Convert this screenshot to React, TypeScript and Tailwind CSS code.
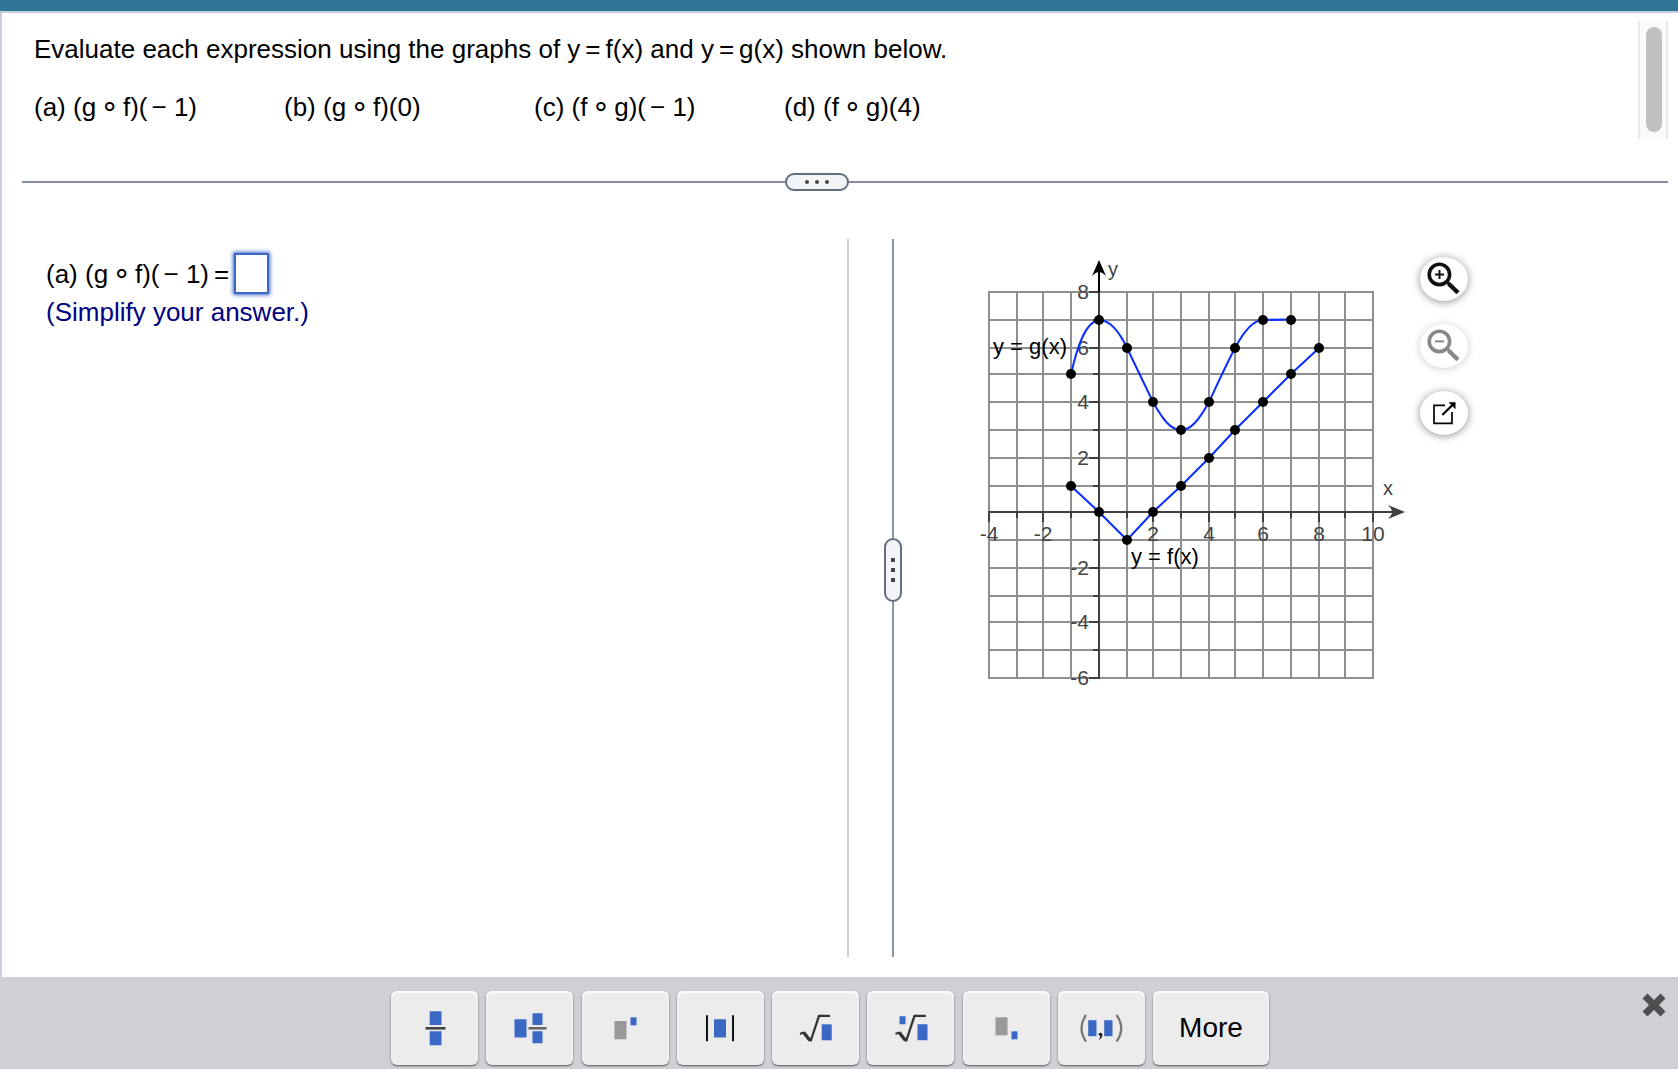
import type { ReactNode } from "react";

const ORIGIN_X = 123;
const XS = [13, 41, 67, 95, 123, 151, 177, 205, 233, 259, 287, 315, 343, 369, 397];
const YS = [438, 410, 382, 356, 328, 300, 272, 246, 218, 190, 162, 134, 108, 80, 52];

// grid runs from -4 to 10 across and from -6 to 8 upwards
const px = (x: number) => XS[x + 4];
const py = (y: number) => YS[y + 6];

const F_POINTS = [
  [-1, 1],
  [0, 0],
  [1, -1],
  [2, 0],
  [3, 1],
  [4, 2],
  [5, 3],
  [6, 4],
  [7, 5],
  [8, 6],
];

const G_POINTS = [
  [-1, 5],
  [0, 7],
  [1, 6],
  [2, 4],
  [3, 3],
  [4, 4],
  [5, 6],
  [6, 7],
  [7, 7],
];

const Op = ({ children }: { children: ReactNode }) => <span className="mx-[5px]">{children}</span>;

const Ring = () => <span className="mx-1 font-['DejaVu_Sans',sans-serif] text-[30px] leading-none">∘</span>;

const Minus = () => (
  <>
    <span className="ml-1">−</span>{" "}
  </>
);

const Graph: React.FC = () => {
  return (
    <svg
      viewBox="0 0 434 460"
      className="mt-px h-[460px] w-[434px] shrink-0 font-['Liberation_Sans',Arial,sans-serif]"
      role="img"
      aria-label="Graphs of f and g"
    >
      <g stroke="#8f8f8f" strokeWidth="2">
        {XS.map((x) => (
          <line key={x} x1={x} x2={x} y1="51" y2="439" />
        ))}
        {YS.map((y) => (
          <line key={y} x1="12" x2="398" y1={y} y2={y} />
        ))}
      </g>
      <g fill="#444" fontSize="21">
        {[-4, -2, 2, 4, 6, 8, 10].map((n) => (
          <text key={n} x={px(n)} y="301" textAnchor="middle">
            {n}
          </text>
        ))}
        {[8, 6, 4, 2, -2, -4, -6].map((n) => (
          <text key={n} x="113" y={py(n) + 7} textAnchor="end">
            {n}
          </text>
        ))}
        <text x="132" y="36" fontSize="20">
          y
        </text>
        <text x="407" y="255" fontSize="20">
          x
        </text>
      </g>
      <g stroke="#404040" strokeWidth="2">
        <line x1="12" x2="416" y1="272" y2="272" />
        <line x1={ORIGIN_X} x2={ORIGIN_X} y1="52" y2="439" />
        {XS.map((x, i) => (
          <line key={x} x1={x} x2={x} y1="272" y2={i % 2 === 0 ? 282 : 278} />
        ))}
        {YS.map((y, i) => (
          <line key={y} x1={i % 2 === 0 ? 113 : 117} x2={ORIGIN_X} y1={y} y2={y} />
        ))}
      </g>
      <line x1={ORIGIN_X} x2={ORIGIN_X} y1="32" y2="52" stroke="#000" strokeWidth="2" />
      <path d="M123 20 L130 36 Q126 32 123 32 Q120 32 116 36 Z" fill="#000" />
      <path d="M429 272 L412 279 Q416 275 416 272 Q416 269 412 265 Z" fill="#404040" />
      <g fill="#000" fontSize="22">
        <text x="17" y="114">
          y = g(x)
        </text>
        <text x="155" y="324">
          y = f(x)
        </text>
      </g>
      <g fill="none" stroke="#0a2dff" strokeWidth="2">
        <path d="M95 134 C101 108 109 82 123 80 C134 80 143 91 151 108 L177 162 C187 180 195 190 205 190 C215 190 223 180 233 162 C241 145 250 125 259 108 C268 91 277 80 287 80 L315 79.5" />
        <polyline points={F_POINTS.map(([x, y]) => `${px(x)},${py(y)}`).join(" ")} />
      </g>
      {[...F_POINTS, ...G_POINTS].map(([x, y]) => (
        <circle key={`${x},${y}`} cx={px(x)} cy={py(y)} r="5" />
      ))}
    </svg>
  );
};

const Magnifier = ({ plus }: { plus?: boolean }) => (
  <svg viewBox="0 0 48 44" className="h-11 w-12" fill="none" stroke="currentColor">
    <circle cx="19.4" cy="17.4" r="10.2" strokeWidth="3.6" />
    <path d="M27 25 L30 27.5" strokeWidth="3" />
    <path d="M28.7 26.7 L38 35.8" strokeWidth="4.4" />
    <path d={plus ? "M15 17.4 H24 M19.5 13 V22" : "M15 17.4 H24"} strokeWidth="2" />
  </svg>
);

const PopOut = () => (
  <svg viewBox="0 0 48 44" className="h-11 w-12" fill="none" stroke="currentColor" strokeWidth="1.7">
    <path d="M25 14.3 H14 V32.3 H32 V21" />
    <path d="M22.3 24 L33 13.5" strokeWidth="2.2" />
    <path d="M28.5 11.3 H35.5 V18.3 Z" fill="currentColor" stroke="none" />
  </svg>
);

const BLUE = "#3b68c5";
const GREY = "#999";

const Key = ({ label, children }: { label: string; children: ReactNode }) => (
  <button
    type="button"
    aria-label={label}
    className="flex h-[74px] w-[87px] items-center justify-center rounded-md bg-[#ececec] shadow-[0_1px_2px_#555,inset_0_2px_2px_#fff]"
  >
    <svg viewBox="-24 -20 48 40" className="h-10 w-12" fill="none">
      {children}
    </svg>
  </button>
);

const Keypad: React.FC = () => {
  return (
    <div className="grid grid-cols-[391fr_878px_409fr] bg-[#cfd0d6] pt-3.5 pb-1">
      <div />
      <div className="flex justify-between">
        <Key label="Fraction">
          <path d="M-5.3 -16.7 H6.5 V-3 H-5.3 Z M-5.3 3.3 H6.5 V17.3 H-5.3 Z" fill={BLUE} />
          <path d="M-9.5 .3 H10.5" stroke="#444" strokeWidth="2.6" />
        </Key>
        <Key label="Mixed number">
          <path d="M-15.5 -8.7 H-3.5 V9.5 H-15.5 Z M2.5 -14.7 H12.5 V-3 H2.5 Z M2.5 3.3 H12.5 V15.3 H2.5 Z" fill={BLUE} />
          <path d="M-1.5 .3 H16.5" stroke="#666" strokeWidth="2.6" />
        </Key>
        <Key label="Exponent">
          <path d="M-10.5 -7 H1.5 V11.3 H-10.5 Z" fill={GREY} />
          <path d="M5.5 -10.7 H11.5 V-2.7 H5.5 Z" fill={BLUE} />
        </Key>
        <Key label="Absolute value">
          <path d="M-6 -8.7 H6 V9.5 H-6 Z" fill={BLUE} />
          <path d="M-13 -12.7 V13.3 M13 -12.7 V13.3" stroke="#111" strokeWidth="2" />
        </Key>
        <Key label="Square root">
          <path d="M5.7 -3.7 H15.7 V12.3 H5.7 Z" fill={BLUE} />
          <path d="M-16 6 L-12.5 4.3" stroke="#333" strokeWidth="2" />
          <path d="M-12.5 4.3 L-6 12.5" stroke="#333" strokeWidth="3.4" />
          <path d="M-5.5 13.5 L3 -12.2 H14" stroke="#333" strokeWidth="2.3" />
        </Key>
        <Key label="Nth root">
          <path d="M6.5 -3.7 H16.5 V12.3 H6.5 Z M-11.5 -11.7 H-5.5 V-3.7 H-11.5 Z" fill={BLUE} />
          <path d="M-15.5 6 L-12 4.3" stroke="#333" strokeWidth="2" />
          <path d="M-12 4.3 L-5.5 12.5" stroke="#333" strokeWidth="3.4" />
          <path d="M-5 13.5 L3.5 -12.2 H14.8" stroke="#333" strokeWidth="2.3" />
        </Key>
        <Key label="Subscript">
          <path d="M-10.5 -10.7 H1.5 V7.3 H-10.5 Z" fill={GREY} />
          <path d="M5.5 3.3 H11.5 V11.3 H5.5 Z" fill={BLUE} />
        </Key>
        <Key label="Ordered pair">
          <path d="M-12.8 -7.7 H-4.5 V8.3 H-12.8 Z M3.2 -7.7 H11.5 V8.3 H3.2 Z" fill={BLUE} />
          <path d="M-15 -13 Q-24 .3 -15 13.5 M15.5 -13 Q25 .3 15.5 13.5" stroke="#777" strokeWidth="2.3" />
          <path d="M-2.600 6.500 a2 2 0 1 1 4 .3 Q1.400 10.500 -2.400 12 Q-.4 9.500 -.8 8.200 Z" fill="#222" />
        </Key>
        <button
          type="button"
          className="h-[74px] w-[116px] rounded-md bg-[#ececec] text-[28px] text-black shadow-[0_1px_2px_#555,inset_0_2px_2px_#fff]"
        >
          More
        </button>
      </div>
      <div className="flex items-start justify-end pr-3">
        <button type="button" aria-label="Close keypad">
          <svg viewBox="0 0 24 28" className="h-7 w-6" stroke="#4f4f4f" strokeWidth="7">
            <path d="M3 5 L21 23 M21 5 L3 23" />
          </svg>
        </button>
      </div>
    </div>
  );
};

const App: React.FC = () => {
  return (
    <div className="flex min-h-screen flex-col bg-white font-['Liberation_Sans',Arial,sans-serif] text-[26px] leading-8 text-black">
      <div className="h-[11px] bg-[#2f7695]" />
      <main className="flex flex-1 flex-col border-t-2 border-l-2 border-[#cbcddb]">
        <header className="flex justify-between pt-2 pr-2.5 pl-8">
          <div className="pt-3">
            <p>
              Evaluate each expression using the graphs of y<Op>=</Op>f(x) and y<Op>=</Op>g(x) shown below.
            </p>
            <div className="mt-[26px] grid grid-cols-[repeat(4,250px)]">
              <span>
                (a) (g<Ring />f)(<Minus />1)
              </span>
              <span>
                (b) (g<Ring />f)(0)
              </span>
              <span>
                (c) (f<Ring />g)(<Minus />1)
              </span>
              <span>
                (d) (f<Ring />g)(4)
              </span>
            </div>
          </div>
          <div className="h-[118px] w-[30px] border-x-2 border-[#e9e9e9] bg-[#fafafa] px-1.5 pt-1.5">
            <div className="mx-auto h-[105px] w-4 rounded-full bg-[#c1c1c1]" />
          </div>
        </header>

        <div className="mt-[34px] flex items-center pr-2.5 pl-5">
          <div className="h-0.5 flex-[763] bg-[#868fa2]" />
          <button
            type="button"
            aria-label="Resize question"
            className="flex h-[18px] w-16 items-center justify-center gap-1.5 rounded-full border-2 border-[#616f80] bg-[#f3f4f7]"
          >
            <span className="size-1 rounded-full bg-[#484848]" />
            <span className="size-1 rounded-full bg-[#484848]" />
            <span className="size-1 rounded-full bg-[#484848]" />
          </button>
          <div className="h-0.5 flex-[819] bg-[#868fa2]" />
        </div>

        <div className="mt-12 mb-5 grid flex-1 grid-cols-[847fr_53px_776fr]">
          <section className="border-r-2 border-[#cfcfcf] pt-3.5 pl-11">
            <label className="flex items-center">
              <span>
                (a) (g<Ring />f)(<Minus />1)<Op>=</Op>
              </span>
              <input
                type="text"
                aria-label="Answer to part (a)"
                className="h-[41px] w-[35px] border-2 border-[#3b68c5] bg-white px-1 shadow-[0_0_4px_1px_#3b68c5] outline-none"
              />
            </label>
            <p className="mt-0.5 text-[#000080]">(Simplify your answer.)</p>
          </section>

          <div className="ml-[35px] flex flex-col items-center">
            <div className="w-0.5 flex-[299] bg-[#8a94a3]" />
            <button
              type="button"
              aria-label="Resize panels"
              className="flex h-16 w-[18px] flex-col items-center justify-center gap-1.5 rounded-full border-2 border-[#616f80] bg-[#f3f4f7]"
            >
              <span className="size-1 bg-[#444]" />
              <span className="size-1 bg-[#444]" />
              <span className="size-1 bg-[#444]" />
            </button>
            <div className="w-0.5 flex-[355] bg-[#8a94a3]" />
          </div>

          <section className="flex gap-2.5 pl-[74px]">
            <Graph />
            <div className="flex flex-col gap-[23px] pt-[18px]">
              <button
                type="button"
                aria-label="Zoom in"
                className="h-11 w-12 rounded-[50%] bg-white text-[#111] shadow-[0_1px_8px_rgba(0,0,0,0.45)]"
              >
                <Magnifier plus />
              </button>
              <button
                type="button"
                aria-label="Zoom out"
                disabled
                className="h-11 w-12 rounded-[50%] bg-white text-[#888] shadow-[0_1px_8px_rgba(0,0,0,0.2)]"
              >
                <Magnifier />
              </button>
              <button
                type="button"
                aria-label="Open in new window"
                className="h-11 w-12 rounded-[50%] bg-white text-black shadow-[0_1px_8px_rgba(0,0,0,0.45)]"
              >
                <PopOut />
              </button>
            </div>
          </section>
        </div>
      </main>
      <Keypad />
    </div>
  );
};

export default App;
